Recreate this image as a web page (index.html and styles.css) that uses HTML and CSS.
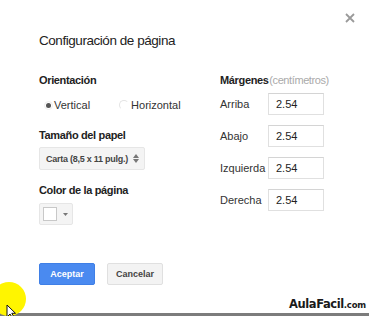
FILE: index.html
```html
<!DOCTYPE html>
<html lang="es">
<head>
  <meta charset="UTF-8">
  <title>Configuración de página</title>
  <link rel="stylesheet" href="styles.css">
</head>
<body>
  <div class="screen">
    <div class="dialog">
      <span class="close">
        <svg width="10" height="10" viewBox="0 0 10 10"><path d="M1 1L9 9M9 1L1 9" stroke="#9a9a9a" stroke-width="1.8"/></svg>
      </span>

      <div class="title">Configuración de página</div>

      <div class="cols">
        <div class="col-left">
          <div class="heading">Orientación</div>
          <div class="radios">
            <label class="radio"><span class="dot on"></span>Vertical</label>
            <label class="radio"><span class="dot"></span>Horizontal</label>
          </div>

          <div class="heading paper">Tamaño del papel</div>
          <div class="select">Carta (8,5 x 11 pulg.)
            <svg width="6" height="9" viewBox="0 0 6 9"><path d="M0 4L3 0L6 4ZM0 5L3 9L6 5Z" fill="#777"/></svg>
          </div>

          <div class="heading color">Color de la página</div>
          <div class="colorbtn">
            <span class="swatch"></span>
            <svg width="5" height="3" viewBox="0 0 5 3"><path d="M0 0L5 0L2.5 3Z" fill="#777"/></svg>
          </div>
        </div>

        <div class="col-right">
          <div class="heading">Márgenes <span class="unit">(centímetros)</span></div>
          <div class="margin-row"><span class="mlabel">Arriba</span><div class="field">2.54</div></div>
          <div class="margin-row"><span class="mlabel">Abajo</span><div class="field">2.54</div></div>
          <div class="margin-row"><span class="mlabel">Izquierda</span><div class="field">2.54</div></div>
          <div class="margin-row"><span class="mlabel">Derecha</span><div class="field">2.54</div></div>
        </div>
      </div>

      <div class="buttons">
        <button class="btn ok">Aceptar</button>
        <button class="btn cancel">Cancelar</button>
      </div>
    </div>
    <div class="bar"></div>

    <!-- overlays from the recording -->
    <div class="pointer"></div>
    <svg class="cursor" width="10" height="14" viewBox="0 0 10 14"><path d="M1 1L1 13L4 10L6.5 14L8 13L5.8 9.3L9.5 9.3Z" fill="#fff" stroke="#111" stroke-width="1"/></svg>
    <div class="brand">AulaFacil<small>.com</small></div>
  </div>
</body>
</html>
```

FILE: styles.css
```css
body {
  margin: 0;
  background: #fff;
  font-family: Arial, "Liberation Sans", sans-serif;
  color: #222;
}

.screen {
  position: relative;
  width: 369px;
  height: 316px;
  overflow: hidden;
  display: flex;
  flex-direction: column;
}

.dialog {
  position: relative;
  flex: 1;
  padding: 33px 0 0 39px;
}

.close {
  position: absolute;
  top: 13px;
  left: 345px;
  line-height: 0;
}

.title {
  font-size: 13.5px;
  letter-spacing: -0.45px;
  line-height: 16px;
  color: #222;
}

.cols {
  display: flex;
  margin-top: 24px;
}

.col-left {
  width: 181px;
  display: flex;
  flex-direction: column;
  align-items: flex-start;
}

.heading {
  font-size: 11px;
  font-weight: bold;
  letter-spacing: -0.35px;
  line-height: 14px;
  color: #222;
}

.unit {
  font-weight: normal;
  color: #aaa;
  letter-spacing: -0.4px;
  margin-left: -2px;
}

.radios {
  display: flex;
  margin-top: 11px;
  height: 14px;
  align-items: center;
}

.radio {
  display: flex;
  align-items: center;
  font-size: 11px;
  color: #333;
}

.radio + .radio {
  margin-left: 29px;
}

.dot {
  width: 9px;
  height: 9px;
  border-radius: 50%;
  border: 1px solid #eee;
  margin: 0 1px 0 5px;
  box-sizing: border-box;
  position: relative;
}

.radio + .radio .dot {
  width: 10px;
  height: 10px;
  border-color: #e4e4e4 transparent transparent #e4e4e4;
  margin: 0 2px 0 0;
}

.dot.on::after {
  content: "";
  position: absolute;
  left: 1px;
  top: 1px;
  width: 5px;
  height: 5px;
  border-radius: 50%;
  background: #555;
}

.paper {
  margin-top: 16px;
}

.select {
  margin-top: 5px;
  height: 23px;
  box-sizing: border-box;
  width: 106px;
  padding: 0 0 0 6px;
  background: #f4f4f4;
  border: 1px solid #e6e6e6;
  border-radius: 2px;
  font-size: 9px;
  font-weight: bold;
  letter-spacing: -0.25px;
  white-space: nowrap;
  color: #444;
  display: flex;
  align-items: center;
  gap: 5px;
}

.color {
  margin-top: 13px;
}

.colorbtn {
  margin-top: 6px;
  width: 34px;
  height: 22px;
  box-sizing: border-box;
  background: #f4f4f4;
  border: 1px solid #e6e6e6;
  border-radius: 2px;
  display: flex;
  align-items: center;
  padding-left: 3px;
  gap: 6px;
}

.swatch {
  width: 14px;
  height: 14px;
  box-sizing: border-box;
  background: #fff;
  border: 1px solid #c8c8c8;
}

.col-right {
  display: flex;
  flex-direction: column;
}

.margin-row {
  display: flex;
  align-items: center;
  height: 22px;
  margin-top: 10px;
}

.heading + .margin-row {
  margin-top: 6px;
}

.mlabel {
  width: 48px;
  font-size: 11px;
  color: #333;
}

.field {
  width: 56px;
  height: 22px;
  box-sizing: border-box;
  border: 1px solid #e0e0e0;
  border-top-color: #d4d4d4;
  padding-left: 7px;
  font-size: 11px;
  line-height: 20px;
  color: #222;
}

.buttons {
  display: flex;
  gap: 12px;
  margin-top: 38px;
}

.btn {
  width: 56px;
  height: 22px;
  border-radius: 2px;
  font-family: Arial, "Liberation Sans", sans-serif;
  font-size: 9px;
  font-weight: bold;
  padding: 0;
}

.ok {
  background: #4a8af0;
  border: 1px solid #3f7fe6;
  color: #fff;
}

.cancel {
  background: #f3f3f3;
  border: 1px solid #e0e0e0;
  color: #444;
}

.bar {
  height: 3px;
  background: #7c7c7c;
}

.pointer {
  position: absolute;
  left: -8px;
  top: 282px;
  width: 34px;
  height: 34px;
  border-radius: 50%;
  background: #fff500;
}

.cursor {
  position: absolute;
  left: 6px;
  top: 304px;
}

.brand {
  position: absolute;
  left: 289px;
  top: 297px;
  font-family: "DejaVu Sans", sans-serif;
  font-size: 11.5px;
  font-weight: bold;
  color: #1a1a1a;
  letter-spacing: -0.4px;
}

.brand small {
  font-size: 8.5px;
  letter-spacing: -0.2px;
}
```
